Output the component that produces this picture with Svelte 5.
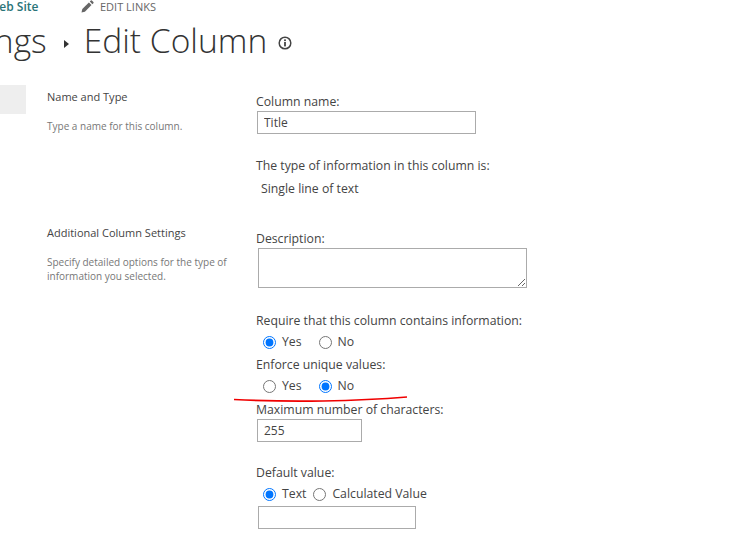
<script>
	const yesNo = ['Yes', 'No'];
</script>

<div class="page">
	<header class="topbar">
		<a class="site" href="#top">Web Site</a>
		<span class="edit-links">
			<svg width="13" height="13" viewBox="0 0 13 13" aria-hidden="true">
				<path d="M0.5 12.5l0.8-3.4 6.6-6.6 2.6 2.6-6.6 6.6z" fill="#666" />
				<path d="M8.8 1.6l1-1a0.8 0.8 0 0 1 1.1 0l1.5 1.5a0.8 0.8 0 0 1 0 1.1l-1 1z" fill="#666" />
			</svg>
			EDIT LINKS
		</span>
	</header>

	<h1 class="title">
		<span class="crumb">Settings</span>
		<span class="arrow"></span>
		<span>Edit Column</span>
		<svg class="info" width="14" height="14" viewBox="0 0 14 14" aria-hidden="true">
			<circle cx="7" cy="7" r="5.8" fill="none" stroke="#444" stroke-width="1.5" />
			<rect x="6.1" y="6" width="1.8" height="4.4" fill="#444" />
			<rect x="6.1" y="3.4" width="1.8" height="1.7" fill="#444" />
		</svg>
	</h1>

	<div class="main">
		<nav class="side"><div class="selected"></div></nav>

		<div class="sections">
			<section class="row first">
				<div class="about">
					<h2>Name and Type</h2>
					<p>Type a name for this column.</p>
				</div>
				<div class="fields">
					<label class="label" for="col-name">Column name:</label>
					<input id="col-name" class="text name" value="Title" />
					<div class="label type-label">The type of information in this column is:</div>
					<div class="type-value">Single line of text</div>
				</div>
			</section>

			<section class="row second">
				<div class="about">
					<h2>Additional Column Settings</h2>
					<p>Specify detailed options for the type of information you selected.</p>
				</div>
				<div class="fields">
					<label class="label" for="col-desc">Description:</label>
					<textarea id="col-desc" class="desc"></textarea>

					<div class="label require">Require that this column contains information:</div>
					<div class="radios">
						{#each yesNo as opt}
							<label><input type="radio" name="req" checked={opt === 'Yes'} />{opt}</label>
						{/each}
					</div>

					<div class="label enforce">Enforce unique values:</div>
					<div class="radios">
						{#each yesNo as opt}
							<label><input type="radio" name="uniq" checked={opt === 'No'} />{opt}</label>
						{/each}
					</div>

					<label class="label max" for="col-max">Maximum number of characters:</label>
					<input id="col-max" class="text max-input" value="255" />

					<div class="label default">Default value:</div>
					<div class="radios tight">
						<label><input type="radio" name="def" checked />Text</label>
						<label><input type="radio" name="def" />Calculated Value</label>
					</div>
					<input class="text default-input" />
				</div>
			</section>
		</div>
	</div>

	<svg class="scribble" width="180" height="12" viewBox="0 0 180 12" aria-hidden="true">
		<path d="M1 8.5C30 10 62 10.5 90 10S150 8 174 6" fill="none" stroke="#f00000" stroke-width="1.7" />
	</svg>
</div>

<style>
	:global(body) {
		margin: 0;
		background: #fff;
	}

	.page {
		position: relative;
		width: 740px;
		height: 553px;
		overflow: hidden;
		font-family: "Open Sans", "Noto Sans", sans-serif;
		color: #444;
	}

	.topbar {
		display: flex;
		align-items: center;
		height: 12px;
		margin-left: -12px;
	}

	.site {
		width: 93px;
		font-size: 12px;
		font-weight: 600;
		color: #2a7478;
		text-decoration: none;
	}

	.edit-links {
		display: flex;
		align-items: center;
		gap: 6px;
		font-size: 11px;
		color: #666;
	}

	.title {
		display: flex;
		align-items: center;
		margin: 8px 0 0 -73px;
		height: 40px;
		font-size: 33.6px;
		font-weight: 300;
		color: #333;
		white-space: nowrap;
	}

	.arrow {
		width: 0;
		height: 0;
		margin: 8px 15px 0 17px;
		border-left: 5px solid #333;
		border-top: 4px solid transparent;
		border-bottom: 4px solid transparent;
	}

	.info {
		margin: 5px 0 0 11px;
	}

	.main {
		display: flex;
		margin-top: 25px;
	}

	.side {
		width: 47px;
		flex: none;
	}

	.selected {
		width: 26px;
		height: 29px;
		background: #eee;
	}

	.sections {
		flex: 1;
	}

	.row {
		display: flex;
	}

	.about {
		width: 209px;
		flex: none;
		padding-top: 4px;
		font-size: 11px;
	}

	h2 {
		margin: 0;
		font-size: 11px;
		font-weight: 400;
		line-height: 16px;
		color: #444;
	}

	.about p {
		width: 190px;
		margin: 14px 0 0;
		font-size: 10px;
		line-height: 14px;
		color: #777;
	}

	.fields {
		display: flex;
		flex-direction: column;
		align-items: flex-start;
		font-size: 12.25px;
	}

	.second {
		margin-top: 24px;
	}

	.label {
		display: block;
		font-size: 12.25px;
		line-height: 16px;
		color: #444;
	}

	.first .fields {
		padding-top: 9px;
	}

	.second .fields {
		padding-top: 10px;
	}

	.text {
		box-sizing: border-box;
		margin: 0 0 0 1px;
		padding: 0 6px;
		border: 1px solid #ababab;
		border-radius: 0;
		font: 12px "Open Sans", sans-serif;
		color: #444;
		background: #fff;
		outline: none;
	}

	.name {
		width: 219px;
		height: 23px;
		margin-top: 1px;
	}

	.type-label {
		margin-top: 24px;
	}

	.type-value {
		margin: 7px 0 0 5px;
		line-height: 16px;
		color: #444;
	}

	.desc {
		box-sizing: border-box;
		display: block;
		width: 269px;
		height: 40px;
		margin: 1px 0 0 2px;
		border: 1px solid #ababab;
		border-radius: 0;
		background: #fff;
		outline: none;
	}

	.require {
		margin-top: 25px;
	}

	.radios {
		display: flex;
		gap: 17px;
		height: 20px;
		margin: 3px 0 0 7px;
		align-items: center;
		color: #444;
	}

	.radios label {
		display: flex;
		align-items: center;
		gap: 6px;
		line-height: 16px;
	}

	.radios input {
		width: 13px;
		height: 13px;
		margin: 0;
	}

	.radios.tight {
		gap: 7px;
	}

	.enforce {
		margin-top: 5px;
	}

	.max {
		margin-top: 6px;
	}

	.max-input {
		width: 105px;
		height: 23px;
		margin-top: 1px;
	}

	.default {
		margin-top: 23px;
	}

	.default-input {
		width: 158px;
		height: 23px;
		margin: 2px 0 0 2px;
	}

	.scribble {
		position: absolute;
		left: 233px;
		top: 391px;
	}
</style>
